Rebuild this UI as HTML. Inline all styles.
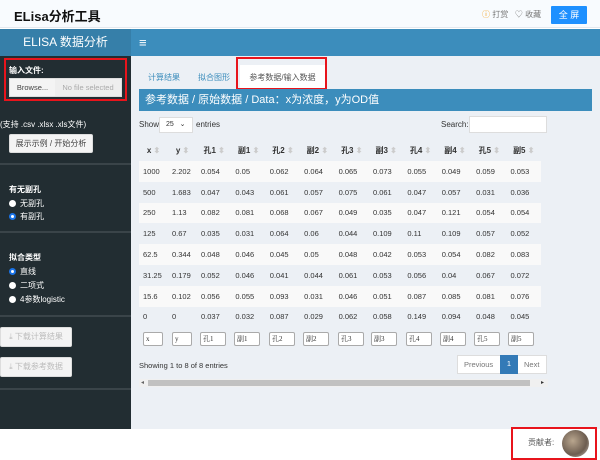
<!DOCTYPE html>
<html><head><meta charset="utf-8"><style>
*{margin:0;padding:0;box-sizing:border-box}
body{width:600px;height:460px;overflow:hidden;position:relative;font-family:"Liberation Sans","Noto Sans CJK SC",sans-serif;background:#fff;color:#333}
.a{position:absolute}
.top{left:0;top:0;width:600px;height:28px;background:#f8fbfe;border-bottom:1px solid #e4e8ee}
.side{left:0;top:29px;width:131px;height:400px;background:#222d32}
.logo{left:0;top:29px;width:131px;height:27px;background:#367fa9;color:#fff;font-size:12px;text-align:center;line-height:27px}
.hdr{left:131px;top:29px;width:469px;height:27px;background:#3c8dbc;color:#fff;font-size:13px;line-height:27px;padding-left:8px}
.content{left:131px;top:56px;width:469px;height:373px;background:#ecf0f5}
.sl{color:#fff;font-size:8px;font-weight:bold}
.sep{left:0;width:131px;height:2px;background:#3a4449}
.btn{background:#f4f4f4;border:1px solid #ddd;border-radius:2px;font-size:8px;color:#444;text-align:center}
.rad{font-size:8px;color:#fff}
.rad i{display:inline-block;width:7px;height:7px;border-radius:50%;background:#fff;vertical-align:-1px;margin-right:4px}
.rad i.on{border:2px solid #1a73e8}
table{border-collapse:collapse;font-size:7.5px;color:#333}
td{height:20.8px;padding-left:4px}
th{height:22px;font-size:8px;text-align:center}
tr.o td{background:#f9f9f9}
.fi{display:inline-block;height:14px;border:1px solid #aaa;border-radius:2px;background:#fff;font-size:7px;line-height:12px;padding-left:2px;font-family:"Liberation Serif","Noto Serif CJK SC",serif}
</style></head><body>
<div class="a top"></div>
<div class="a" style="left:14px;top:6px;font-size:13px;font-weight:bold;color:#111">ELisa分析工具</div>
<div class="a" style="left:482px;top:9px;font-size:8px;color:#777"><span style="color:#f39c12">ⓘ</span> 打赏 &nbsp; ♡ 收藏</div>
<div class="a" style="left:551px;top:6px;width:36px;height:18px;background:#1e90ff;color:#fff;font-size:9px;text-align:center;line-height:18px;border-radius:1px">全 屏</div>
<div class="a side"></div>
<div class="a logo">ELISA 数据分析</div>
<div class="a hdr">≡</div>
<div class="a content"></div>

<div class="a" style="left:4px;top:58px;width:123px;height:43px;border:2px solid #e8141c"></div>
<div class="a sl" style="left:9px;top:65px">输入文件:</div>
<div class="a" style="left:9px;top:78px;width:113px;height:19px;background:#f4f4f4;border:1px solid #ddd;font-size:7.5px;line-height:17px"><span style="display:inline-block;width:45px;text-align:center;color:#444">Browse...</span><span style="display:inline-block;width:66px;height:17px;background:#eee;color:#aaa;text-align:center">No file selected</span></div>
<div class="a" style="left:0;top:119px;font-size:8px;color:#fff">(支持 .csv .xlsx .xls文件)</div>
<div class="a btn" style="left:9px;top:134px;width:84px;height:19px;line-height:17px">展示示例 / 开始分析</div>
<div class="a sep" style="top:163px"></div>
<div class="a sl" style="left:9px;top:184px">有无副孔</div>
<div class="a rad" style="left:9px;top:198px"><i></i>无副孔</div>
<div class="a rad" style="left:9px;top:211px"><i class="on"></i>有副孔</div>
<div class="a sep" style="top:231px"></div>
<div class="a sl" style="left:9px;top:252px">拟合类型</div>
<div class="a rad" style="left:9px;top:266px"><i class="on"></i>直线</div>
<div class="a rad" style="left:9px;top:280px"><i></i>二项式</div>
<div class="a rad" style="left:9px;top:294px"><i></i>4参数logistic</div>
<div class="a sep" style="top:315px"></div>
<div class="a btn" style="left:0;top:327px;width:72px;height:20px;line-height:18px;color:#bbb">⤓ 下载计算结果</div>
<div class="a btn" style="left:0;top:357px;width:72px;height:20px;line-height:18px;color:#bbb">⤓ 下载参考数据</div>
<div class="a sep" style="top:388px"></div>

<div class="a" style="left:148px;top:72px;font-size:8px;color:#3c8dbc">计算结果</div>
<div class="a" style="left:198px;top:72px;font-size:8px;color:#3c8dbc">拟合图形</div>
<div class="a" style="left:240px;top:65px;width:85px;height:25px;background:#fff;font-size:8px;color:#555;text-align:center;line-height:25px">参考数据/输入数据</div>
<div class="a" style="left:236px;top:57px;width:91px;height:33px;border:2px solid #e8141c"></div>
<div class="a" style="left:139px;top:89px;width:453px;height:22px;background:#3c8dbc;color:#fff;font-size:11px;line-height:22px;padding-left:6px">参考数据 / 原始数据 / Data：x为浓度，y为OD值</div>
<div class="a" style="left:139px;top:120px;font-size:8px;color:#333">Show</div>
<div class="a" style="left:159px;top:117px;width:34px;height:16px;background:#fff;border:1px solid #ddd;font-size:7px;line-height:14px;padding-left:6px">25 &nbsp; ⌄</div>
<div class="a" style="left:196px;top:120px;font-size:8px;color:#333">entries</div>
<div class="a" style="left:441px;top:120px;font-size:8px;color:#333">Search:</div>
<div class="a" style="left:469px;top:116px;width:78px;height:17px;background:#fff;border:1px solid #ddd"></div>

<table class="a" style="left:139px;top:139px;width:402px;table-layout:fixed">
<colgroup><col style="width:29px"><col style="width:29px"><col span="10" style="width:34.4px"></colgroup>
<tr><th>x <span style="color:#ccc">⬍</span></th><th>y <span style="color:#ccc">⬍</span></th><th>孔1 <span style="color:#ccc">⬍</span></th><th>副1 <span style="color:#ccc">⬍</span></th><th>孔2 <span style="color:#ccc">⬍</span></th><th>副2 <span style="color:#ccc">⬍</span></th><th>孔3 <span style="color:#ccc">⬍</span></th><th>副3 <span style="color:#ccc">⬍</span></th><th>孔4 <span style="color:#ccc">⬍</span></th><th>副4 <span style="color:#ccc">⬍</span></th><th>孔5 <span style="color:#ccc">⬍</span></th><th>副5 <span style="color:#ccc">⬍</span></th></tr>
<tr class="o"><td>1000</td><td>2.202</td><td>0.054</td><td>0.05</td><td>0.062</td><td>0.064</td><td>0.065</td><td>0.073</td><td>0.055</td><td>0.049</td><td>0.059</td><td>0.053</td></tr>
<tr><td>500</td><td>1.683</td><td>0.047</td><td>0.043</td><td>0.061</td><td>0.057</td><td>0.075</td><td>0.061</td><td>0.047</td><td>0.057</td><td>0.031</td><td>0.036</td></tr>
<tr class="o"><td>250</td><td>1.13</td><td>0.082</td><td>0.081</td><td>0.068</td><td>0.067</td><td>0.049</td><td>0.035</td><td>0.047</td><td>0.121</td><td>0.054</td><td>0.054</td></tr>
<tr><td>125</td><td>0.67</td><td>0.035</td><td>0.031</td><td>0.064</td><td>0.06</td><td>0.044</td><td>0.109</td><td>0.11</td><td>0.109</td><td>0.057</td><td>0.052</td></tr>
<tr class="o"><td>62.5</td><td>0.344</td><td>0.048</td><td>0.046</td><td>0.045</td><td>0.05</td><td>0.048</td><td>0.042</td><td>0.053</td><td>0.054</td><td>0.082</td><td>0.083</td></tr>
<tr><td>31.25</td><td>0.179</td><td>0.052</td><td>0.046</td><td>0.041</td><td>0.044</td><td>0.061</td><td>0.053</td><td>0.056</td><td>0.04</td><td>0.067</td><td>0.072</td></tr>
<tr class="o"><td>15.6</td><td>0.102</td><td>0.056</td><td>0.055</td><td>0.093</td><td>0.031</td><td>0.046</td><td>0.051</td><td>0.087</td><td>0.085</td><td>0.081</td><td>0.076</td></tr>
<tr><td>0</td><td>0</td><td>0.037</td><td>0.032</td><td>0.087</td><td>0.029</td><td>0.062</td><td>0.058</td><td>0.149</td><td>0.094</td><td>0.048</td><td>0.045</td></tr>
</table>
<div class="a fi" style="left:143px;top:332px;width:20px">x</div>
<div class="a fi" style="left:172px;top:332px;width:20px">y</div>
<div class="a fi" style="left:200px;top:332px;width:26px">孔1</div>
<div class="a fi" style="left:234px;top:332px;width:26px">副1</div>
<div class="a fi" style="left:269px;top:332px;width:26px">孔2</div>
<div class="a fi" style="left:303px;top:332px;width:26px">副2</div>
<div class="a fi" style="left:338px;top:332px;width:26px">孔3</div>
<div class="a fi" style="left:371px;top:332px;width:26px">副3</div>
<div class="a fi" style="left:406px;top:332px;width:26px">孔4</div>
<div class="a fi" style="left:440px;top:332px;width:26px">副4</div>
<div class="a fi" style="left:474px;top:332px;width:26px">孔5</div>
<div class="a fi" style="left:508px;top:332px;width:26px">副5</div>

<div class="a" style="left:139px;top:361px;font-size:7.5px;color:#333">Showing 1 to 8 of 8 entries</div>
<div class="a" style="left:457px;top:355px;width:90px;height:19px;background:#fff;border:1px solid #ddd;font-size:7.5px;line-height:17px;color:#777">
<span style="position:absolute;left:6px">Previous</span>
<span style="position:absolute;left:42px;top:-1px;width:18px;height:19px;background:#337ab7;color:#fff;text-align:center">1</span>
<span style="position:absolute;left:66px">Next</span></div>
<div class="a" style="left:139px;top:379px;width:409px;height:8px;background:#f0f0f0"></div>
<div class="a" style="left:148px;top:380px;width:382px;height:6px;background:#c1c1c1"></div>
<div class="a" style="left:141px;top:379px;font-size:6px;color:#666">◂</div>
<div class="a" style="left:541px;top:379px;font-size:6px;color:#333">▸</div>

<div class="a" style="left:511px;top:427px;width:86px;height:33px;border:2px solid #e8141c"></div>
<div class="a" style="left:528px;top:437px;font-size:8px;color:#555">贡献者:</div>
<div class="a" style="left:562px;top:430px;width:27px;height:27px;border-radius:50%;background:radial-gradient(circle at 40% 40%,#b9a68e,#6d5d50 60%,#cfc9c0)"></div>
</body></html>
